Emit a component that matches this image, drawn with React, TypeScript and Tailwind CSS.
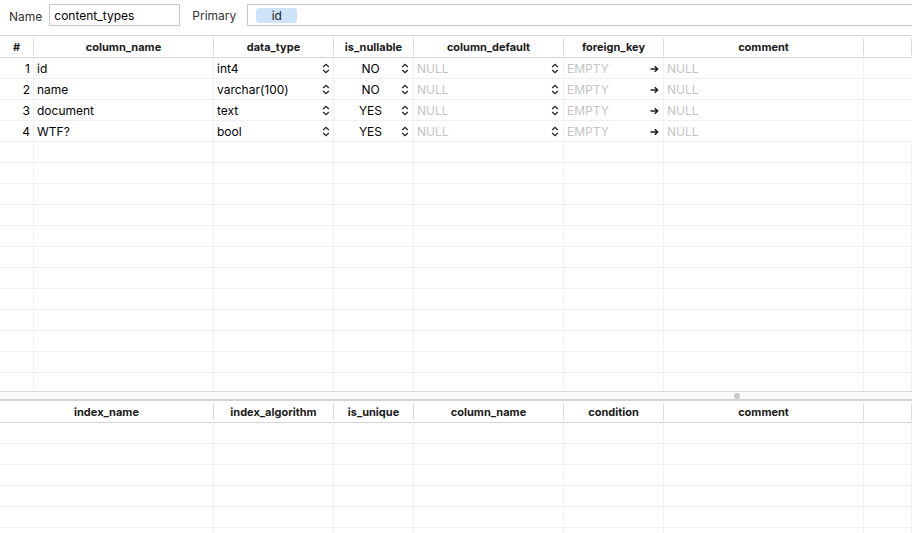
const font = { fontFamily: '"Helvetica Neue", Inter, "Liberation Sans", Arial, sans-serif' }

const topCols = ["#", "column_name", "data_type", "is_nullable", "column_default", "foreign_key", "comment", ""]
const bottomCols = ["index_name", "index_algorithm", "is_unique", "column_name", "condition", "comment", ""]

const topGrid = "grid grid-cols-[34px_180px_120px_80px_150px_100px_200px_1fr]"
const bottomGrid = "grid grid-cols-[214px_120px_80px_150px_100px_200px_1fr]"

type Column = {
  name: string
  type: string
  nullable: string
}

const columns: Column[] = [
  { name: "id", type: "int4", nullable: "NO" },
  { name: "name", type: "varchar(100)", nullable: "NO" },
  { name: "document", type: "text", nullable: "YES" },
  { name: "WTF?", type: "bool", nullable: "YES" },
]

function Stepper() {
  return (
    <svg width="8" height="11" viewBox="0 0 8 11" className="shrink-0">
      <path d="M1.2 4 L4 1.3 L6.8 4" fill="none" stroke="#222" strokeWidth="1.3" />
      <path d="M1.2 7 L4 9.7 L6.8 7" fill="none" stroke="#222" strokeWidth="1.3" />
    </svg>
  )
}

function Arrow() {
  return (
    <svg width="9" height="8" viewBox="0 0 9 8" className="shrink-0">
      <path d="M0.5 4 H7.5" stroke="#111" strokeWidth="1.4" />
      <path d="M4.8 1.2 L7.6 4 L4.8 6.8" fill="none" stroke="#111" strokeWidth="1.4" />
    </svg>
  )
}

function HeaderRow({ cols, grid }: { cols: string[]; grid: string }) {
  return (
    <div className={`${grid} h-[22px] shrink-0 border-b border-[#d4d4d4] bg-white`}>
      {cols.map((c, i) => (
        <div key={i} className="flex items-center justify-center">
          <span className="flex-1 text-center text-[11px] font-bold text-[#1a1a1a] pt-px">{c}</span>
          <span className="w-px h-[17px] bg-[#dcdcdc]" />
        </div>
      ))}
    </div>
  )
}

function EmptyRow({ count, grid }: { count: number; grid: string }) {
  return (
    <div className={`${grid} h-[21px] shrink-0 border-b border-[#f0f0f0]`}>
      {Array.from({ length: count }).map((_, i) => (
        <div key={i} className="border-r border-[#f0f0f0]" />
      ))}
    </div>
  )
}

function DataRow({ col, idx }: { col: Column; idx: number }) {
  return (
    <div className={`${topGrid} h-[21px] shrink-0 border-b border-[#f0f0f0] text-[12px] text-black`}>
      <div className="border-r border-[#f0f0f0] flex items-center justify-end pr-[3px] pt-px">{idx + 1}</div>
      <div className="border-r border-[#f0f0f0] flex items-center pl-[3px] pt-px">{col.name}</div>
      <div className="border-r border-[#f0f0f0] flex items-center pl-[3px] pr-[3px] justify-between pt-px">
        <span>{col.type}</span>
        <Stepper />
      </div>
      <div className="border-r border-[#f0f0f0] flex items-center pr-[4px] pt-px">
        <span className="flex-1 text-center pl-[6px]">{col.nullable}</span>
        <Stepper />
      </div>
      <div className="border-r border-[#f0f0f0] flex items-center pl-[3px] pr-[4px] justify-between pt-px">
        <span className="text-[#c4c4c4]">NULL</span>
        <Stepper />
      </div>
      <div className="border-r border-[#f0f0f0] flex items-center pl-[3px] pr-[4px] justify-between pt-px">
        <span className="text-[#c4c4c4]">EMPTY</span>
        <Arrow />
      </div>
      <div className="border-r border-[#f0f0f0] flex items-center pl-[3px] pt-px">
        <span className="text-[#c4c4c4]">NULL</span>
      </div>
      <div />
    </div>
  )
}

export default function App() {
  return (
    <div className="w-[912px] h-[533px] bg-white flex flex-col overflow-hidden" style={font}>
      {/* structure form */}
      <div className="h-[36px] shrink-0 border-b border-[#d4d4d4] flex items-start pt-[4px] text-[12px] text-[#333]">
        <span className="ml-[9px] mt-[4px]">Name</span>
        <div className="ml-[7px] w-[131px] h-[22px] border border-[#c8c8c8] flex items-center pl-[4px] text-black text-[12px] pt-px">
          content_types
        </div>
        <span className="ml-[12px] mt-[3px]">Primary</span>
        <div className="ml-[11px] flex-1 h-[22px] border border-r-0 border-[#c8c8c8] flex items-center pl-[8px]">
          <span className="w-[41px] h-[15px] rounded-[4px] bg-[#cde4f8] text-center leading-[15px] text-[12px] text-[#222]">id</span>
        </div>
      </div>

      {/* columns table */}
      <HeaderRow cols={topCols} grid={topGrid} />
      <div className="h-[333px] shrink-0 overflow-hidden flex flex-col">
        {columns.map((c, i) => (
          <DataRow key={i} col={c} idx={i} />
        ))}
        {Array.from({ length: 14 }).map((_, i) => (
          <EmptyRow key={i} count={8} grid={topGrid} />
        ))}
      </div>

      {/* splitter */}
      <div className="h-[10px] shrink-0 border-t border-[#dcdcdc] border-b-2 border-b-[#d4d4d4] bg-[#fafafa] flex items-center justify-center pl-[562px]">
        <span className="w-[6px] h-[6px] rounded-full bg-[#c8c8c8]" />
      </div>

      {/* indexes table */}
      <HeaderRow cols={bottomCols} grid={bottomGrid} />
      <div className="flex-1 overflow-hidden flex flex-col">
        {Array.from({ length: 6 }).map((_, i) => (
          <EmptyRow key={i} count={7} grid={bottomGrid} />
        ))}
      </div>
    </div>
  )
}
